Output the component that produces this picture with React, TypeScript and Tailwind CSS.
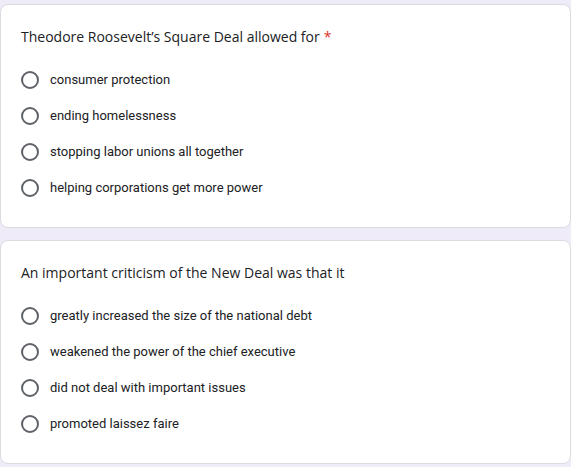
const questions = [
  {
    title: "Theodore Roosevelt’s Square Deal allowed for",
    required: true,
    options: [
      "consumer protection",
      "ending homelessness",
      "stopping labor unions all together",
      "helping corporations get more power",
    ],
  },
  {
    title: "An important criticism of the New Deal was that it",
    required: false,
    options: [
      "greatly increased the size of the national debt",
      "weakened the power of the chief executive",
      "did not deal with important issues",
      "promoted laissez faire",
    ],
  },
]

function Radio() {
  return <span className="h-[18px] w-[18px] shrink-0 rounded-full border-2 border-[#5f6368]" />
}

export default function App() {
  return (
    <div className="min-h-[467px] bg-[#f0ebf8] pt-[4px]">
      {questions.map((q, i) => (
        <div
          key={i}
          className={
            "rounded-lg border border-[#dadce0] bg-white pl-[20px] pr-6 pt-[20px] pb-[21px] " +
            (i > 0 ? "mt-3" : "")
          }
        >
          <div className="h-6 text-[14px] leading-6 text-[#202124] font-['Open_Sans',sans-serif]">
            {q.title}
            {q.required && <span className="ml-1 text-[#d93025]">*</span>}
          </div>
          <div className="mt-[13px]">
            {q.options.map((o) => (
              <div key={o} className="flex h-9 items-center gap-[11px]">
                <Radio />
                <span className="text-[13px] text-[#202124] font-['Roboto',sans-serif]">{o}</span>
              </div>
            ))}
          </div>
        </div>
      ))}
    </div>
  )
}
